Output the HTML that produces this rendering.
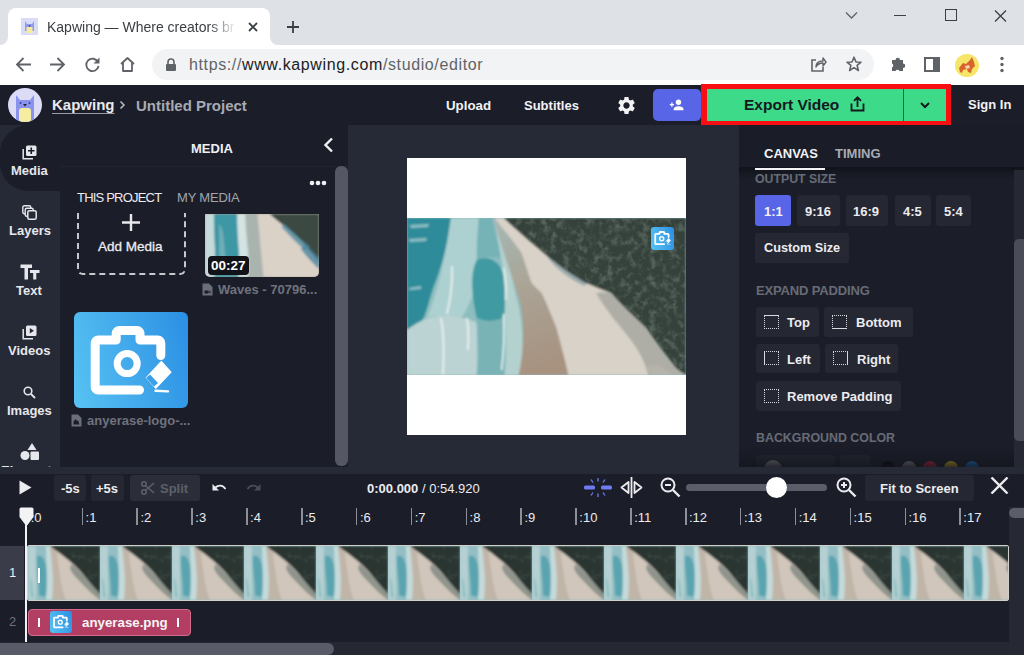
<!DOCTYPE html>
<html><head><meta charset="utf-8">
<style>
*{box-sizing:border-box;margin:0;padding:0}
html,body{width:1024px;height:655px;overflow:hidden;background:#dee1e6;font-family:"Liberation Sans",sans-serif}
.a{position:absolute}
.t{position:absolute;white-space:nowrap;line-height:1}
svg{display:block}
</style></head><body>
<!-- CHROME -->
<div class="a" style="left:0;top:0;width:1024px;height:45px;background:#dee1e6"></div>
<div class="a" style="left:8px;top:8px;width:262px;height:38px;background:#fff;border-radius:8px 8px 0 0"></div>
<div class="a" style="left:0;top:37px;width:8px;height:8px;background:#fff"></div>
<div class="a" style="left:0;top:29px;width:8px;height:16px;background:#dee1e6;border-radius:0 0 8px 0"></div>
<div class="a" style="left:270px;top:37px;width:8px;height:8px;background:#fff"></div>
<div class="a" style="left:270px;top:29px;width:10px;height:16px;background:#dee1e6;border-radius:0 0 0 8px"></div>
<!-- favicon -->
<svg class="a" style="left:21px;top:18px" width="17" height="17" viewBox="0 0 17 17"><rect width="17" height="17" fill="#d9dcf7"/><path d="M4 3 L6 6 L11 6 L13 3 L13 13 L4 13Z" fill="#8f9af0"/><rect x="5.5" y="9" width="6" height="6" fill="#f7ec9c"/><path d="M7.5 7.5h2l-1 1.5z" fill="#222"/></svg>
<div class="t" style="left:47px;top:20px;height:18px;font-size:14px;color:#3c4043;width:190px;overflow:hidden;-webkit-mask-image:linear-gradient(90deg,#000 85%,transparent)">Kapwing — Where creators br</div>
<svg class="a" style="left:247px;top:21px" width="12" height="12" viewBox="0 0 12 12"><path d="M2 2L10 10M10 2L2 10" stroke="#3c4043" stroke-width="1.8"/></svg>
<svg class="a" style="left:286px;top:20px" width="14" height="14" viewBox="0 0 14 14"><path d="M7 1V13M1 7H13" stroke="#3c4043" stroke-width="1.8"/></svg>
<!-- window controls -->
<svg class="a" style="left:845px;top:11px" width="13" height="9" viewBox="0 0 13 9"><path d="M1 1.5L6.5 7L12 1.5" stroke="#5f6368" stroke-width="1.3" fill="none"/></svg>
<div class="a" style="left:894px;top:15px;width:12px;height:1.2px;background:#3c4043"></div>
<div class="a" style="left:945px;top:9px;width:12px;height:12px;border:1.3px solid #3c4043"></div>
<svg class="a" style="left:994px;top:10px" width="13" height="12" viewBox="0 0 13 12"><path d="M1 0.5L12 11.5M12 0.5L1 11.5" stroke="#3c4043" stroke-width="1.3"/></svg>
<!-- toolbar -->
<div class="a" style="left:0;top:45px;width:1024px;height:40px;background:#fff"></div>
<svg class="a" style="left:15px;top:56px" width="17" height="17" viewBox="0 0 17 17"><path d="M16 8.5H2.5M8.5 2L2 8.5L8.5 15" stroke="#5f6368" stroke-width="1.8" fill="none"/></svg>
<svg class="a" style="left:49px;top:56px" width="17" height="17" viewBox="0 0 17 17"><path d="M1 8.5H14.5M8.5 2L15 8.5L8.5 15" stroke="#5f6368" stroke-width="1.8" fill="none"/></svg>
<svg class="a" style="left:84px;top:56px" width="17" height="17" viewBox="0 0 17 17"><path d="M14 6A6.2 6.2 0 1 0 14.6 10" stroke="#5f6368" stroke-width="1.8" fill="none"/><path d="M15.5 1.5V7.5H9.5Z" fill="#5f6368"/></svg>
<svg class="a" style="left:119px;top:56px" width="17" height="17" viewBox="0 0 17 17"><path d="M2 8L8.5 2L15 8M4 6.5V15H13V6.5" stroke="#5f6368" stroke-width="1.8" fill="none" stroke-linejoin="round"/></svg>
<div class="a" style="left:152px;top:49px;width:722px;height:31px;background:#f1f3f4;border-radius:16px"></div>
<svg class="a" style="left:165px;top:58px" width="12" height="13" viewBox="0 0 12 13"><path d="M3 6V4A3 3 0 0 1 9 4V6" stroke="#5f6368" stroke-width="1.6" fill="none"/><rect x="1" y="6" width="10" height="7" rx="1" fill="#5f6368"/></svg>
<div class="t" style="left:189px;top:57px;font-size:16px;letter-spacing:0.62px;color:#5f6368">https://<span style="color:#202124">www.kapwing.com</span>/studio/editor</div>
<!-- right toolbar icons -->
<svg class="a" style="left:810px;top:56px" width="17" height="16" viewBox="0 0 17 16"><path d="M6 4H2V15H13V11" stroke="#5f6368" stroke-width="1.6" fill="none"/><path d="M6 11C6 7 9 5 13 5V2L16 6L13 10V7C10 7 7.5 8 6 11Z" stroke="#5f6368" stroke-width="1.4" fill="none" stroke-linejoin="round"/></svg>
<svg class="a" style="left:846px;top:56px" width="16" height="16" viewBox="0 0 16 16"><path d="M8 1.2L10 6L15 6.2L11.1 9.4L12.4 14.5L8 11.7L3.6 14.5L4.9 9.4L1 6.2L6 6Z" stroke="#5f6368" stroke-width="1.6" fill="none" stroke-linejoin="round"/></svg>
<svg class="a" style="left:890px;top:56px" width="16" height="16" viewBox="0 0 16 16"><path d="M2 4H5.5A2.2 2.2 0 0 1 10 4H13V7.5A2.2 2.2 0 0 1 13 12V15H9.5A2.2 2.2 0 0 0 5.5 15H2V11.5A2.2 2.2 0 0 0 2 7.5Z" fill="#5f6368"/></svg>
<svg class="a" style="left:924px;top:57px" width="16" height="15" viewBox="0 0 16 15"><rect x="1" y="1" width="14" height="13" stroke="#5f6368" stroke-width="2" fill="none"/><rect x="9" y="1" width="6" height="13" fill="#5f6368"/></svg>
<div class="a" style="left:955px;top:54px;width:24px;height:23px;border-radius:50%;background:#f5e66a;overflow:hidden"><svg width="24" height="23" viewBox="0 0 24 23"><path d="M4 14L8 9L11 10L15 6L17 3L19 8L20 12L17 15L16 19L13 18L12 15L8 16L7 19L5 18Z" fill="#d8642b"/><path d="M10 12L14 11L15 14L11 15Z" fill="#f3d4b0"/></svg></div>
<svg class="a" style="left:999px;top:56px" width="6" height="17" viewBox="0 0 6 17"><circle cx="3" cy="2.5" r="1.7" fill="#5f6368"/><circle cx="3" cy="8.5" r="1.7" fill="#5f6368"/><circle cx="3" cy="14.5" r="1.7" fill="#5f6368"/></svg>


<svg width="0" height="0" style="position:absolute">
<defs>
<filter id="bl" x="-5%" y="-5%" width="110%" height="110%"><feGaussianBlur stdDeviation="1.2"/></filter>
<filter id="bl2" x="-5%" y="-5%" width="110%" height="110%"><feGaussianBlur stdDeviation="0.9"/></filter>
<filter id="tex" x="0" y="0" width="100%" height="100%"><feTurbulence type="fractalNoise" baseFrequency="0.14" numOctaves="3" seed="4" result="n"/><feColorMatrix in="n" type="matrix" values="0 0 0 0 0.13  0 0 0 0 0.17  0 0 0 0 0.15  0 0 0 3 -1.4" result="s"/><feComposite in="s" in2="SourceAlpha" operator="in"/></filter><filter id="tex2" x="0" y="0" width="100%" height="100%"><feTurbulence type="fractalNoise" baseFrequency="0.12" numOctaves="3" seed="7" result="n"/><feColorMatrix in="n" type="matrix" values="0 0 0 0 0.35  0 0 0 0 0.42  0 0 0 0 0.38  0 0 0 3 -1.7" result="s"/><feComposite in="s" in2="SourceAlpha" operator="in"/></filter><linearGradient id="wet" x1="0" y1="0" x2="1" y2="0"><stop offset="0" stop-color="#a3b5b0"/><stop offset=".6" stop-color="#b29f8a"/><stop offset="1" stop-color="#c9bcad"/></linearGradient>
<linearGradient id="wet2" x1="0" y1="0" x2="0.3" y2="1"><stop offset="0" stop-color="#a5b8b6"/><stop offset=".45" stop-color="#aaa597"/><stop offset="1" stop-color="#a89280"/></linearGradient><linearGradient id="logo" x1="0" y1="1" x2="1" y2="0"><stop offset="0" stop-color="#5cc6f4"/><stop offset="1" stop-color="#2b8de2"/></linearGradient>
<symbol id="beach" viewBox="0 0 280 157" preserveAspectRatio="none">
<rect width="280" height="157" fill="#8dbdbf"/>
<g filter="url(#bl2)">
<path d="M0,0 L46,0 C42,20 36,45 28,65 C22,80 20,95 14,105 C10,108 5,110 0,112Z" fill="#2f8b99"/>
<path d="M3,7 L22,6 L21,9 L4,10Z M2,21 L20,20 L19,23 L3,24Z M2,70 L14,68 L14,71 L3,72Z" fill="#cfe3e3" opacity=".6"/>
<path d="M44,0 L76,0 C74,20 72,40 70,60 C66,80 60,95 50,105 C40,100 30,95 20,100 C28,80 36,55 44,0Z" fill="#add0d0"/>
<path d="M0,112 C10,104 22,98 36,98 C50,98 62,100 70,105 L72,157 L0,157Z" fill="#bcd3d3"/>
<path d="M72,0 L88,0 C90,15 92,30 94,40 C84,38 76,40 70,42 C70,25 71,12 72,0Z" fill="#74b3b7"/>
<path d="M70,42 C84,36 96,46 98,62 C100,80 100,92 96,100 C88,104 78,104 70,100 C66,80 62,58 70,42Z" fill="#3f9aa2"/>
<path d="M70,100 C78,104 88,104 96,100 C98,120 100,140 98,157 L70,157 C72,130 70,115 70,100Z" fill="#79b3b5"/>
<path d="M86,0 L94,0 C98,25 104,55 110,80 C116,100 118,130 114,157 L98,157 C100,130 100,110 98,92 C100,70 94,30 86,0Z" fill="#b3d1cf"/>
<path d="M45,48 C46,65 44,80 40,96 M34,100 C38,120 37,140 36,157 M60,100 C62,110 62,120 61,132 M97,50 C99,60 100,70 99,82 M97,96 C98,115 97,135 95,152" stroke="#eef5f5" stroke-width="1.6" fill="none"/>
<path d="M86,0 L200,0 L200,157 L112,157 C118,130 118,100 112,80 C104,55 94,25 86,0Z" fill="url(#wet2)"/>
<path d="M88,0 L98,0 C112,12 125,25 137,35 C155,50 170,60 180,65 C190,70 198,73 205,75 C218,90 230,100 240,110 C250,125 260,140 270,150 L270,157 L162,157 C158,140 154,125 150,110 C144,95 140,85 135,75 C130,70 127,67 125,65 C120,50 116,38 115,35 C105,20 95,10 88,0Z" fill="#d9d2c8"/>
<path d="M190,75 C200,74 205,75 205,75 C218,90 230,100 240,110 C250,125 260,140 270,150 L280,157 L242,157 C238,140 228,125 215,110 C205,98 195,85 190,75Z" fill="#aeaea6"/>
<path d="M140,38 C155,48 170,58 182,64 L178,68 C165,62 150,52 140,38Z" fill="#8aa0a6" opacity=".8"/>
<path d="M97,0 L280,0 L280,157 C276,154 272,152 270,150 C262,140 250,125 240,110 C230,100 218,90 205,75 C198,72 190,69 180,65 C170,60 155,50 137,35 C125,25 110,12 97,0Z" fill="#34423b"/>
<path d="M240,150 C248,145 258,148 266,157 L246,157Z" fill="#b8b5ac" opacity=".8"/>
</g>
<path d="M97,0 L280,0 L280,157 C276,154 272,152 270,150 C262,140 250,125 240,110 C230,100 218,90 205,75 C198,72 190,69 180,65 C170,60 155,50 137,35 C125,25 110,12 97,0Z" fill="#000" filter="url(#tex)" opacity=".7"/><path d="M97,0 L280,0 L280,157 C276,154 272,152 270,150 C262,140 250,125 240,110 C230,100 218,90 205,75 C198,72 190,69 180,65 C170,60 155,50 137,35 C125,25 110,12 97,0Z" fill="#000" filter="url(#tex2)" opacity=".12"/>
</symbol>
<symbol id="thumb" viewBox="0 0 113 63" preserveAspectRatio="none">
<rect width="113" height="63" fill="#b0a99c"/>
<g filter="url(#bl2)">
<path d="M0,0 L10,0 C8,20 12,40 9,63 L0,63Z" fill="#c4dadb"/>
<path d="M9,0 L34,0 C31,20 36,45 33,63 L9,63 C12,40 8,20 9,0Z" fill="#3d97a4"/>
<path d="M14,10 C20,15 18,35 22,50 L14,45Z" fill="#7ab5bb" opacity=".8"/>
<path d="M32,0 L42,0 C40,20 45,45 43,63 L33,63 C36,45 31,20 32,0Z" fill="#d3e4e3"/>
<path d="M40,0 L56,0 C58,20 60,45 62,63 L43,63 C45,45 40,20 40,0Z" fill="#a9b4ae"/>
<path d="M52,0 L113,0 L113,63 L58,63 C56,45 54,20 52,0Z" fill="#dad1c7"/>
<path d="M64,0 L113,0 L113,48 C106,40 100,32 94,26 C86,18 76,10 64,0Z" fill="#3a4a42"/>
<path d="M78,10 C88,18 96,27 104,33 L99,36 C92,30 84,22 76,13Z" fill="#5b8fa3" opacity=".85"/>
<path d="M99,30 C104,35 110,40 113,44 L113,55 C106,48 100,42 95,35Z" fill="#4a84a0" opacity=".8"/>
</g>
</symbol>
<symbol id="frame" viewBox="0 0 72 53" preserveAspectRatio="none">
<rect width="72" height="53" fill="#93bec3"/>
<g filter="url(#bl2)">
<path d="M0,0 L8,0 C7,20 9,35 8,53 L0,53Z" fill="#b5d0d2"/>
<path d="M9,10 C14,8 19,16 19,26 C18,36 20,44 17,50 L11,48 C12,40 8,20 9,10Z" fill="#5aa4b0"/>
<path d="M2,30 C5,35 4,45 6,50 L3,50Z" fill="#7db5bd" opacity=".8"/>
<path d="M18,0 L25,0 C24,18 26,35 25,53 L18,53 C20,35 18,18 18,0Z" fill="#c4dada"/>
<path d="M22,0 L72,0 L72,53 L24,53 C26,35 25,18 22,0Z" fill="#d1c6bb"/>
<path d="M24,53 C26,40 25,25 22,0 L28,0 C31,25 33,40 38,53Z" fill="#bcb0a3" opacity=".8"/>
<path d="M44,18 C55,27 64,38 72,46 L72,53 C62,46 55,38 47,30 C43,25 40,21 44,18Z" fill="#8f948d"/>
<path d="M22,0 L72,0 L72,47 C67,42 62,36 57,30 C50,21 38,11 22,0Z" fill="#2b3631"/>
</g>
<path d="M22,0 L72,0 L72,47 C67,42 62,36 57,30 C50,21 38,11 22,0Z" fill="#000" filter="url(#tex2)" opacity=".15"/>
</symbol>
<symbol id="cam" viewBox="0 0 113 96">
<path d="M86.3,43.5 V31 A3,3 0 0 0 83.3,28 H65.5 V21.5 A3,3 0 0 0 62.5,18.5 H44.7 A3,3 0 0 0 41.7,21.5 V28 H23.7 A3,3 0 0 0 20.7,31 V75 A3,3 0 0 0 23.7,78 H65" stroke="#fff" stroke-width="9" fill="none" stroke-linecap="round" stroke-linejoin="round"/>
<circle cx="52.7" cy="51.6" r="10" stroke="#fff" stroke-width="7" fill="none"/>
<path d="M86.9,48.4 L97.2,60.3 L81.3,77 L71,65.8Z" fill="#fff"/>
<path d="M75.5,62.5 L83.5,71 L79.5,74.5 L71.5,66Z" fill="#3aa0e8"/>
<path d="M81,78.8 L93.5,79.4" stroke="#fff" stroke-width="2.4" stroke-linecap="round"/>
</symbol>
</defs>
</svg>
<!-- APP -->
<div class="a" style="left:0;top:85px;width:1024px;height:570px;background:#1b1e29"></div>

<!-- HEADER -->
<div class="a" style="left:0;top:85px;width:1024px;height:40px;background:#1b1e29"></div>
<div class="a" style="left:8px;top:88px;width:34px;height:34px;border-radius:50%;background:#dcdcf6;overflow:hidden"><svg width="34" height="34" viewBox="0 0 34 34"><path d="M8 7L12 12H22L26 7V34H8Z" fill="#8a94ee"/><rect x="11" y="20" width="12" height="14" rx="3" fill="#f6eda0"/><path d="M15 16h4l-2 2.5z" fill="#222"/><circle cx="12.5" cy="15" r="1" fill="#3a3f9a"/><circle cx="21.5" cy="15" r="1" fill="#3a3f9a"/></svg></div>
<div class="t" style="left:52px;top:97px;font-size:15px;font-weight:700;color:#e9e9ee;text-decoration:underline;text-underline-offset:3px;text-decoration-color:#9b9ba8">Kapwing</div>
<svg class="a" style="left:119px;top:100px" width="7" height="10" viewBox="0 0 7 10"><path d="M1.5 1.5L5 5L1.5 8.5" stroke="#bbbcc5" stroke-width="1.5" fill="none"/></svg>
<div class="t" style="left:136px;top:98px;font-size:15px;font-weight:700;color:#a8aab3">Untitled Project</div>
<div class="t" style="left:446px;top:99px;font-size:13.3px;font-weight:700;color:#f2f2f5">Upload</div>
<div class="t" style="left:524px;top:99px;font-size:13px;font-weight:700;color:#f2f2f5">Subtitles</div>
<svg class="a" style="left:616px;top:94.5px" width="21" height="21" viewBox="0 0 24 24"><path fill="#f2f2f5" d="M19.14 12.94c.04-.3.06-.61.06-.94 0-.32-.02-.64-.07-.94l2.03-1.58a.49.49 0 0 0 .12-.61l-1.92-3.32a.49.49 0 0 0-.59-.22l-2.39.96c-.5-.38-1.03-.7-1.62-.94l-.36-2.54a.48.48 0 0 0-.48-.41h-3.84c-.24 0-.43.17-.47.41l-.36 2.54c-.59.24-1.13.57-1.62.94l-2.39-.96a.48.48 0 0 0-.59.22L2.74 8.87c-.12.21-.08.47.12.61l2.03 1.58c-.05.3-.09.63-.09.94s.02.64.07.94l-2.03 1.58a.49.49 0 0 0-.12.61l1.92 3.32c.12.22.37.29.59.22l2.39-.96c.5.38 1.03.7 1.62.94l.36 2.54c.05.24.24.41.48.41h3.84c.24 0 .44-.17.47-.41l.36-2.54c.59-.24 1.13-.56 1.62-.94l2.39.96c.22.08.47 0 .59-.22l1.92-3.32c.12-.22.07-.47-.12-.61l-2.01-1.58zM12 15.6c-1.98 0-3.6-1.62-3.6-3.6s1.62-3.6 3.6-3.6 3.6 1.62 3.6 3.6-1.62 3.6-3.6 3.6z"/></svg>
<div class="a" style="left:653px;top:89px;width:48px;height:32px;border-radius:5px;background:#5865e6"></div>
<svg class="a" style="left:669px;top:99px" width="16" height="12" viewBox="0 0 16 12"><circle cx="9.5" cy="3.2" r="2.7" fill="#fff"/><path d="M4.6 11.2C4.6 8.2 6.8 7.3 9.5 7.3S14.6 8.2 14.6 11.2Z" fill="#fff"/><path d="M0.8 5.7H5M2.9 3.6V7.8" stroke="#fff" stroke-width="1.3"/></svg>
<div class="a" style="left:701px;top:84px;width:250px;height:42px;background:#f80f14"></div>
<div class="a" style="left:707px;top:89px;width:196px;height:32px;background:#3ddb89"></div>
<div class="a" style="left:904px;top:89px;width:42px;height:32px;background:#3ddb89"></div>
<div class="a" style="left:903px;top:89px;width:1px;height:32px;background:#1f6b47"></div>
<div class="t" style="left:744px;top:97px;font-size:15.5px;font-weight:700;color:#16181f">Export Video</div>
<svg class="a" style="left:850px;top:96px" width="15" height="16" viewBox="0 0 15 16"><path d="M7.5 11V1.5M4 4.8L7.5 1.3L11 4.8" stroke="#16181f" stroke-width="1.8" fill="none"/><path d="M1.5 7.5V14.5H13.5V7.5" stroke="#16181f" stroke-width="1.8" fill="none"/></svg>
<svg class="a" style="left:919px;top:101px" width="12" height="8" viewBox="0 0 12 8"><path d="M2 2L6 6L10 2" stroke="#16181f" stroke-width="2" fill="none"/></svg>
<div class="t" style="left:968px;top:98px;font-size:13px;font-weight:700;color:#f2f2f5">Sign In</div>

<!-- MAIN BGs -->
<div class="a" style="left:0;top:125px;width:60px;height:342px;background:#262a36"></div>
<div class="a" style="left:0;top:125px;width:80px;height:66px;background:#1b1e29;border-radius:28px 0 0 28px"></div>
<div class="a" style="left:60px;top:125px;width:288px;height:342px;background:#1b1e29"></div>
<div class="a" style="left:348px;top:125px;width:391px;height:342px;background:#262a36"></div>
<div class="a" style="left:739px;top:125px;width:285px;height:342px;background:#1b1e29"></div>
<div class="a" style="left:0;top:467px;width:1024px;height:7px;background:#262a36"></div>
<div class="a" style="left:0;top:474px;width:1024px;height:181px;background:#1b1e29"></div>

<!-- LEFT NAV -->
<svg class="a" style="left:22px;top:145px" width="15" height="15" viewBox="0 0 15 15"><path d="M1.2 4V13.8H11" stroke="#e6e7ec" stroke-width="1.5" fill="none"/><rect x="4" y="0.5" width="10.5" height="10.5" rx="1.5" fill="#e6e7ec"/><path d="M9.25 2.5V9M6 5.75H12.5" stroke="#1b1e29" stroke-width="1.6"/></svg>
<div class="t" style="left:11px;top:164px;font-size:13px;font-weight:700;color:#e6e7ec">Media</div>
<svg class="a" style="left:22px;top:205px" width="15" height="15" viewBox="0 0 15 15"><rect x="0.8" y="0.8" width="8" height="8" rx="1.5" stroke="#e6e7ec" stroke-width="1.4" fill="none"/><rect x="3.2" y="3.2" width="8" height="8" rx="1.5" stroke="#e6e7ec" stroke-width="1.4" fill="#262a36"/><rect x="5.8" y="5.8" width="8.4" height="8.4" rx="1.5" stroke="#e6e7ec" stroke-width="1.5" fill="#262a36"/></svg>
<div class="t" style="left:9px;top:224px;font-size:13px;font-weight:700;color:#e6e7ec">Layers</div>
<svg class="a" style="left:20px;top:264px" width="20" height="16" viewBox="0 0 20 16"><path d="M0.5 0.5H12V4H8V15.5H4.5V4H0.5Z" fill="#e6e7ec"/><path d="M10 6H19.5V9H16.3V15.5H13.2V9H10Z" fill="#e6e7ec"/></svg>
<div class="t" style="left:16px;top:284px;font-size:13px;font-weight:700;color:#e6e7ec">Text</div>
<svg class="a" style="left:22px;top:325px" width="15" height="15" viewBox="0 0 15 15"><path d="M1.2 4V13.8H11" stroke="#e6e7ec" stroke-width="1.5" fill="none"/><rect x="4" y="0.5" width="10.5" height="10.5" rx="1.5" fill="#e6e7ec"/><path d="M7.8 3V8.5L12 5.75Z" fill="#262a36"/></svg>
<div class="t" style="left:8px;top:344px;font-size:13px;font-weight:700;color:#e6e7ec">Videos</div>
<svg class="a" style="left:23px;top:386px" width="13" height="13" viewBox="0 0 13 13"><circle cx="5" cy="5" r="3.8" stroke="#e6e7ec" stroke-width="1.6" fill="none"/><path d="M8 8L12 12" stroke="#e6e7ec" stroke-width="1.8"/></svg>
<div class="t" style="left:7px;top:404px;font-size:13px;font-weight:700;color:#e6e7ec">Images</div>
<svg class="a" style="left:20px;top:443px" width="20" height="18" viewBox="0 0 20 18"><path d="M12 0L16.5 7H7.5Z" fill="#e6e7ec"/><circle cx="5" cy="12.5" r="4.5" fill="#e6e7ec"/><rect x="10.5" y="8.5" width="8.5" height="8.5" rx="1" fill="#e6e7ec"/></svg>
<div class="a" style="left:0;top:464px;width:60px;height:3px;overflow:hidden"><div class="t" style="left:1px;top:0px;font-size:13px;font-weight:700;color:#e6e7ec">Elements</div></div>

<!-- MEDIA PANEL -->
<div class="t" style="left:191px;top:142px;font-size:13px;font-weight:700;color:#f0f0f4">MEDIA</div>
<svg class="a" style="left:323px;top:137px" width="11" height="16" viewBox="0 0 11 16"><path d="M9 1.5L2.5 8L9 14.5" stroke="#f0f0f4" stroke-width="2.4" fill="none"/></svg>
<div class="a" style="left:60px;top:166px;width:288px;height:1px;background:#22252f"></div>
<div class="a" style="left:335px;top:166px;width:13px;height:300px;background:#555864;border-radius:6px"></div>
<svg class="a" style="left:309px;top:180px" width="18" height="6" viewBox="0 0 18 6"><circle cx="3" cy="3" r="2.3" fill="#f0f0f4"/><circle cx="9" cy="3" r="2.3" fill="#f0f0f4"/><circle cx="15" cy="3" r="2.3" fill="#f0f0f4"/></svg>
<div class="t" style="left:77px;top:191px;font-size:13px;letter-spacing:-0.8px;color:#ececf0">THIS PROJECT</div>
<div class="t" style="left:177px;top:191px;font-size:13px;letter-spacing:-0.2px;color:#a3a5ae">MY MEDIA</div>
<div class="a" style="left:77px;top:200px;width:109px;height:75px;border:2px dashed #c8c9cf;border-radius:6px;clip-path:inset(13px -2px -2px -2px)"></div>
<svg class="a" style="left:121px;top:214px" width="20" height="17" viewBox="0 0 20 17"><path d="M10 0V17M1 8.5H19" stroke="#e8e8ec" stroke-width="2.4"/></svg>
<div class="t" style="left:98px;top:240px;font-size:13.5px;color:#ececf0;font-weight:400;-webkit-text-stroke:0.3px #ececf0">Add Media</div>

<!-- thumbnails -->
<div class="a" style="left:205px;top:214px;width:114px;height:63px;border-radius:0 0 5px 5px;overflow:hidden"><svg width="114" height="63"><use href="#thumb" width="114" height="63"/></svg></div>
<div class="a" style="left:208px;top:256px;width:41px;height:19px;border-radius:4px;background:#111318"></div>
<div class="t" style="left:211px;top:259px;font-size:13.5px;font-weight:700;color:#fff">00:27</div>
<svg class="a" style="left:202px;top:283px" width="11" height="13" viewBox="0 0 11 13"><path d="M0.5 0.5H7L10.5 4V12.5H0.5Z" fill="#6c6f7a"/><path d="M2.5 7.5H6.5V10.5H2.5ZM6.5 9L8.5 7.5V10.5Z" fill="#1b1e29"/></svg>
<div class="t" style="left:218px;top:283px;font-size:13px;font-weight:700;color:#6f727d">Waves - 70796...</div>
<div class="a" style="left:74px;top:312px;width:114px;height:96px;border-radius:6px;background:linear-gradient(75deg,#58c3f3,#2b8fe3)"></div>
<svg class="a" style="left:74px;top:312px" width="114" height="96" viewBox="0 0 113 96"><use href="#cam" width="113" height="96"/></svg>
<svg class="a" style="left:71px;top:414px" width="11" height="13" viewBox="0 0 11 13"><path d="M0.5 0.5H7L10.5 4V12.5H0.5Z" fill="#6c6f7a"/><path d="M2.5 7.5L4.5 5L6 7L7 6L8.5 10.5H2.5Z" fill="#1b1e29"/></svg>
<div class="t" style="left:87px;top:414px;font-size:13px;font-weight:700;color:#6f727d">anyerase-logo-...</div>
<!-- CANVAS -->
<div class="a" style="left:407px;top:158px;width:279px;height:277px;background:#fff"></div>
<svg class="a" style="left:407px;top:218px" width="279" height="157"><use href="#beach" width="279" height="157"/></svg>
<div class="a" style="left:651px;top:227px;width:23px;height:23px;border-radius:3px;background:linear-gradient(75deg,#58c3f3,#2b8fe3)"></div>
<svg class="a" style="left:651px;top:228px" width="23" height="20" viewBox="0 0 113 96"><use href="#cam" width="113" height="96"/></svg>

<!-- RIGHT PANEL -->
<div class="a" style="left:739px;top:125px;width:285px;height:42px;background:#1a1d27"></div>
<div class="t" style="left:764px;top:147px;font-size:13px;font-weight:700;color:#f3f3f6">CANVAS</div>
<div class="t" style="left:835px;top:147px;font-size:13px;font-weight:700;color:#a9abb4">TIMING</div>
<div class="a" style="left:739px;top:167px;width:285px;height:3px;background:#12141b"></div>
<div class="a" style="left:755px;top:168px;width:70px;height:3px;background:#f3f3f6"></div>
<div class="a" style="left:739px;top:170px;width:275px;height:10px;background:linear-gradient(#14161e,#1b1e29)"></div>
<div class="a" style="left:1014px;top:170px;width:10px;height:297px;background:#262934"></div>
<div class="a" style="left:1014px;top:239px;width:10px;height:202px;background:#4a4d58;border-radius:5px 0 0 5px"></div>
<div class="t" style="left:755px;top:173px;font-size:12.3px;font-weight:700;color:#686b76">OUTPUT SIZE</div>
<div class="a" style="left:755px;top:195px;width:36px;height:31px;border-radius:3px;background:#5865e6"></div>
<div class="t" style="left:764px;top:205px;font-size:13px;font-weight:700;color:#f3f3f6">1:1</div>
<div class="a" style="left:797px;top:195px;width:43px;height:31px;border-radius:3px;background:#252833"></div>
<div class="t" style="left:805px;top:205px;font-size:13px;font-weight:700;color:#ececf0">9:16</div>
<div class="a" style="left:846px;top:195px;width:42px;height:31px;border-radius:3px;background:#252833"></div>
<div class="t" style="left:853px;top:205px;font-size:13px;font-weight:700;color:#ececf0">16:9</div>
<div class="a" style="left:895px;top:195px;width:36px;height:31px;border-radius:3px;background:#252833"></div>
<div class="t" style="left:903px;top:205px;font-size:13px;font-weight:700;color:#ececf0">4:5</div>
<div class="a" style="left:936px;top:195px;width:35px;height:31px;border-radius:3px;background:#252833"></div>
<div class="t" style="left:944px;top:205px;font-size:13px;font-weight:700;color:#ececf0">5:4</div>
<div class="a" style="left:755px;top:233px;width:94px;height:30px;border-radius:3px;background:#252833"></div>
<div class="t" style="left:764px;top:242px;font-size:12.7px;font-weight:700;color:#ececf0">Custom Size</div>
<div class="t" style="left:756px;top:284px;font-size:13px;font-weight:700;letter-spacing:-0.15px;color:#686b76">EXPAND PADDING</div>
<div class="a" style="left:756px;top:307px;width:63px;height:30px;border-radius:3px;background:#252833"></div>
<div class="a" style="left:764px;top:315px;width:15px;height:14px;border:1.5px dotted #d8d9de;border-top:1.5px solid #d8d9de"></div>
<div class="t" style="left:787px;top:316px;font-size:13px;font-weight:700;color:#ececf0">Top</div>
<div class="a" style="left:824px;top:307px;width:89px;height:30px;border-radius:3px;background:#252833"></div>
<div class="a" style="left:832px;top:315px;width:15px;height:14px;border:1.5px dotted #d8d9de;border-bottom:1.5px solid #d8d9de"></div>
<div class="t" style="left:856px;top:316px;font-size:13px;font-weight:700;color:#ececf0">Bottom</div>
<div class="a" style="left:756px;top:344px;width:64px;height:29px;border-radius:3px;background:#252833"></div>
<div class="a" style="left:764px;top:351px;width:15px;height:14px;border:1.5px dotted #d8d9de;border-left:1.5px solid #d8d9de"></div>
<div class="t" style="left:787px;top:353px;font-size:13px;font-weight:700;color:#ececf0">Left</div>
<div class="a" style="left:825px;top:344px;width:73px;height:29px;border-radius:3px;background:#252833"></div>
<div class="a" style="left:833px;top:351px;width:15px;height:14px;border:1.5px dotted #d8d9de;border-right:1.5px solid #d8d9de"></div>
<div class="t" style="left:857px;top:353px;font-size:13px;font-weight:700;color:#ececf0">Right</div>
<div class="a" style="left:756px;top:381px;width:145px;height:30px;border-radius:3px;background:#252833"></div>
<div class="a" style="left:764px;top:389px;width:15px;height:14px;border:1.5px dotted #d8d9de"></div>
<div class="t" style="left:787px;top:390px;font-size:13px;font-weight:700;color:#ececf0">Remove Padding</div>
<div class="t" style="left:756px;top:432px;font-size:12.4px;font-weight:700;color:#686b76">BACKGROUND COLOR</div>
<div class="a" style="left:739px;top:445px;width:275px;height:22px;overflow:hidden"><div class="a" style="left:17px;top:10px;width:79px;height:12px;border-radius:3px 3px 0 0;background:#252833"></div>
<div class="a" style="left:25px;top:15px;width:18px;height:18px;border-radius:50%;background:#8a8a8a"></div>
<div class="a" style="left:101px;top:10px;width:30px;height:12px;border-radius:3px 3px 0 0;background:#252833"></div>
<div class="a" style="left:142px;top:16px;width:14px;height:14px;border-radius:50%;background:#000"></div>
<div class="a" style="left:163px;top:16px;width:14px;height:14px;border-radius:50%;background:#8e8e8e"></div>
<div class="a" style="left:184px;top:16px;width:14px;height:14px;border-radius:50%;background:#d9243a"></div>
<div class="a" style="left:205px;top:16px;width:14px;height:14px;border-radius:50%;background:#e4c019"></div>
<div class="a" style="left:226px;top:16px;width:14px;height:14px;border-radius:50%;background:#1b7ed6"></div>
<div class="a" style="left:0px;top:0px;width:275px;height:22px;background:linear-gradient(rgba(27,30,41,0),rgba(20,22,30,.85))"></div></div>

<!-- TIMELINE -->
<svg class="a" style="left:19px;top:480px" width="13" height="15" viewBox="0 0 13 15"><path d="M0.5 0.5L12.5 7.5L0.5 14.5Z" fill="#ececf0"/></svg>
<div class="a" style="left:54px;top:475px;width:32px;height:26px;border-radius:3px;background:#252833"></div>
<div class="t" style="left:61px;top:482px;font-size:13px;font-weight:700;color:#ececf0">-5s</div>
<div class="a" style="left:91px;top:475px;width:33px;height:26px;border-radius:3px;background:#252833"></div>
<div class="t" style="left:96px;top:482px;font-size:13px;font-weight:700;color:#ececf0">+5s</div>
<div class="a" style="left:130px;top:475px;width:70px;height:26px;border-radius:3px;background:#2b2e39"></div>
<svg class="a" style="left:141px;top:481px" width="14" height="14" viewBox="0 0 14 14"><circle cx="3" cy="3" r="2.2" stroke="#5d606b" stroke-width="1.5" fill="none"/><circle cx="3" cy="11" r="2.2" stroke="#5d606b" stroke-width="1.5" fill="none"/><path d="M4.5 4.5L13 12M4.5 9.5L13 2" stroke="#5d606b" stroke-width="1.5"/></svg>
<div class="t" style="left:160px;top:482px;font-size:13px;font-weight:700;color:#5d606b">Split</div>
<svg class="a" style="left:212px;top:482px" width="15" height="11" viewBox="0 0 15 11"><path d="M3.5 5.5C6 3 10.5 2.5 13.5 7" stroke="#ececf0" stroke-width="1.8" fill="none"/><path d="M0.5 2V8.5H7Z" fill="#ececf0"/></svg>
<svg class="a" style="left:246px;top:482px" width="15" height="11" viewBox="0 0 15 11"><path d="M11.5 5.5C9 3 4.5 2.5 1.5 7" stroke="#4a4d58" stroke-width="1.8" fill="none"/><path d="M14.5 2V8.5H8Z" fill="#4a4d58"/></svg>
<div class="t" style="left:367px;top:482px;font-size:13px;color:#ececf0"><b>0:00.000</b> / 0:54.920</div>
<svg class="a" style="left:583px;top:477px" width="30" height="21" viewBox="0 0 30 21"><rect x="1" y="8.5" width="11" height="4" rx="1.5" fill="#6e7bf2"/><rect x="18" y="8.5" width="11" height="4" rx="1.5" fill="#6e7bf2"/><path d="M15 1V4.5M15 16.5V20M8 2.5L10 5.5M22 2.5L20 5.5M8 18.5L10 15.5M22 18.5L20 15.5" stroke="#6e7bf2" stroke-width="1.3"/></svg>
<svg class="a" style="left:620px;top:477px" width="23" height="21" viewBox="0 0 23 21"><path d="M11.5 0V21" stroke="#ececf0" stroke-width="1.8"/><path d="M8.5 5L1.5 10.5L8.5 16Z M14.5 5L21.5 10.5L14.5 16Z" stroke="#ececf0" stroke-width="1.8" fill="none" stroke-linejoin="round"/></svg>
<svg class="a" style="left:660px;top:477px" width="21" height="21" viewBox="0 0 21 21"><circle cx="8" cy="8" r="6.5" stroke="#ececf0" stroke-width="2" fill="none"/><path d="M5 8H11" stroke="#ececf0" stroke-width="2"/><path d="M13 13L19.5 19.5" stroke="#ececf0" stroke-width="2.4"/></svg>
<div class="a" style="left:686px;top:484px;width:141px;height:7px;border-radius:4px;background:#5b5e69"></div>
<div class="a" style="left:766px;top:477px;width:21px;height:21px;border-radius:50%;background:#fff"></div>
<svg class="a" style="left:836px;top:477px" width="21" height="21" viewBox="0 0 21 21"><circle cx="8" cy="8" r="6.5" stroke="#ececf0" stroke-width="2" fill="none"/><path d="M5 8H11M8 5V11" stroke="#ececf0" stroke-width="2"/><path d="M13 13L19.5 19.5" stroke="#ececf0" stroke-width="2.4"/></svg>
<div class="a" style="left:865px;top:475px;width:109px;height:26px;border-radius:3px;background:#252833"></div>
<div class="t" style="left:880px;top:482px;font-size:13px;font-weight:700;color:#ececf0">Fit to Screen</div>
<svg class="a" style="left:990px;top:477px" width="19" height="17" viewBox="0 0 19 17"><path d="M1.5 0.5L17.5 16.5M17.5 0.5L1.5 16.5" stroke="#ececf0" stroke-width="2.4"/></svg>
<!-- ruler -->
<div class="a" style="left:26.7px;top:508px;width:1.6px;height:17px;background:#8d9099"></div><div class="t" style="left:30.7px;top:511px;font-size:13px;color:#ececf0">:0</div><div class="a" style="left:81.6px;top:508px;width:1.6px;height:17px;background:#8d9099"></div><div class="t" style="left:85.6px;top:511px;font-size:13px;color:#ececf0">:1</div><div class="a" style="left:136.4px;top:508px;width:1.6px;height:17px;background:#8d9099"></div><div class="t" style="left:140.4px;top:511px;font-size:13px;color:#ececf0">:2</div><div class="a" style="left:191.3px;top:508px;width:1.6px;height:17px;background:#8d9099"></div><div class="t" style="left:195.3px;top:511px;font-size:13px;color:#ececf0">:3</div><div class="a" style="left:246.1px;top:508px;width:1.6px;height:17px;background:#8d9099"></div><div class="t" style="left:250.1px;top:511px;font-size:13px;color:#ececf0">:4</div><div class="a" style="left:301.0px;top:508px;width:1.6px;height:17px;background:#8d9099"></div><div class="t" style="left:305.0px;top:511px;font-size:13px;color:#ececf0">:5</div><div class="a" style="left:355.9px;top:508px;width:1.6px;height:17px;background:#8d9099"></div><div class="t" style="left:359.9px;top:511px;font-size:13px;color:#ececf0">:6</div><div class="a" style="left:410.7px;top:508px;width:1.6px;height:17px;background:#8d9099"></div><div class="t" style="left:414.7px;top:511px;font-size:13px;color:#ececf0">:7</div><div class="a" style="left:465.6px;top:508px;width:1.6px;height:17px;background:#8d9099"></div><div class="t" style="left:469.6px;top:511px;font-size:13px;color:#ececf0">:8</div><div class="a" style="left:520.4px;top:508px;width:1.6px;height:17px;background:#8d9099"></div><div class="t" style="left:524.4px;top:511px;font-size:13px;color:#ececf0">:9</div><div class="a" style="left:575.3px;top:508px;width:1.6px;height:17px;background:#8d9099"></div><div class="t" style="left:579.3px;top:511px;font-size:13px;color:#ececf0">:10</div><div class="a" style="left:630.2px;top:508px;width:1.6px;height:17px;background:#8d9099"></div><div class="t" style="left:634.2px;top:511px;font-size:13px;color:#ececf0">:11</div><div class="a" style="left:685.0px;top:508px;width:1.6px;height:17px;background:#8d9099"></div><div class="t" style="left:689.0px;top:511px;font-size:13px;color:#ececf0">:12</div><div class="a" style="left:739.9px;top:508px;width:1.6px;height:17px;background:#8d9099"></div><div class="t" style="left:743.9px;top:511px;font-size:13px;color:#ececf0">:13</div><div class="a" style="left:794.7px;top:508px;width:1.6px;height:17px;background:#8d9099"></div><div class="t" style="left:798.7px;top:511px;font-size:13px;color:#ececf0">:14</div><div class="a" style="left:849.6px;top:508px;width:1.6px;height:17px;background:#8d9099"></div><div class="t" style="left:853.6px;top:511px;font-size:13px;color:#ececf0">:15</div><div class="a" style="left:904.5px;top:508px;width:1.6px;height:17px;background:#8d9099"></div><div class="t" style="left:908.5px;top:511px;font-size:13px;color:#ececf0">:16</div><div class="a" style="left:959.3px;top:508px;width:1.6px;height:17px;background:#8d9099"></div><div class="t" style="left:963.3px;top:511px;font-size:13px;color:#ececf0">:17</div>
<div class="a" style="left:1009px;top:507px;width:15px;height:148px;background:#262934"></div>
<div class="a" style="left:1009px;top:508px;width:15px;height:10px;border-radius:5px 0 0 5px;background:#5b5e69"></div>
<!-- tracks -->
<div class="a" style="left:0;top:546px;width:24px;height:54px;background:#3a3d49"></div>
<div class="t" style="left:9px;top:566px;font-size:13px;color:#ececf0">1</div>
<div class="t" style="left:9px;top:615px;font-size:13px;color:#6f727d">2</div>
<div class="a" style="left:27px;top:545px;width:982px;height:56px;border:1px solid #d2cfcb;border-radius:2px;background:#333"></div>
<div class="a" style="left:28px;top:546px;width:980px;height:54px;overflow:hidden"><svg class="a" style="left:0px;top:0px" width="72" height="54"><use href="#frame" width="72" height="54"/></svg><svg class="a" style="left:72px;top:0px" width="72" height="54"><use href="#frame" width="72" height="54"/></svg><svg class="a" style="left:144px;top:0px" width="72" height="54"><use href="#frame" width="72" height="54"/></svg><svg class="a" style="left:216px;top:0px" width="72" height="54"><use href="#frame" width="72" height="54"/></svg><svg class="a" style="left:288px;top:0px" width="72" height="54"><use href="#frame" width="72" height="54"/></svg><svg class="a" style="left:360px;top:0px" width="72" height="54"><use href="#frame" width="72" height="54"/></svg><svg class="a" style="left:432px;top:0px" width="72" height="54"><use href="#frame" width="72" height="54"/></svg><svg class="a" style="left:504px;top:0px" width="72" height="54"><use href="#frame" width="72" height="54"/></svg><svg class="a" style="left:576px;top:0px" width="72" height="54"><use href="#frame" width="72" height="54"/></svg><svg class="a" style="left:648px;top:0px" width="72" height="54"><use href="#frame" width="72" height="54"/></svg><svg class="a" style="left:720px;top:0px" width="72" height="54"><use href="#frame" width="72" height="54"/></svg><svg class="a" style="left:792px;top:0px" width="72" height="54"><use href="#frame" width="72" height="54"/></svg><svg class="a" style="left:864px;top:0px" width="72" height="54"><use href="#frame" width="72" height="54"/></svg><svg class="a" style="left:936px;top:0px" width="72" height="54"><use href="#frame" width="72" height="54"/></svg>
</div><div class="a" style="left:38px;top:568px;width:2px;height:15px;background:#fff"></div>
<div class="a" style="left:28px;top:609px;width:163px;height:27px;border-radius:4px;background:#b23f63;border:1px solid #d46a8a"></div>
<div class="a" style="left:38px;top:618px;width:2px;height:9px;background:#fff"></div>
<div class="a" style="left:177px;top:618px;width:2px;height:9px;background:#fff"></div>
<div class="a" style="left:50px;top:611px;width:22px;height:22px;border-radius:3px;background:linear-gradient(75deg,#58c3f3,#2b8fe3)"></div>
<svg class="a" style="left:50px;top:612px" width="22" height="19" viewBox="0 0 113 96"><use href="#cam" width="113" height="96"/></svg>
<div class="t" style="left:82px;top:616px;font-size:13.3px;font-weight:700;color:#f5f5f7">anyerase.png</div>
<!-- playhead -->
<div class="a" style="left:25px;top:520px;width:2.4px;height:122px;background:#f3f3f6"></div>
<svg class="a" style="left:19px;top:507px" width="15" height="19" viewBox="0 0 15 19"><path d="M2 0.5H13A1.5 1.5 0 0 1 14.5 2V10L8.5 18H6.5L0.5 10V2A1.5 1.5 0 0 1 2 0.5Z" fill="#f3f3f6"/></svg>
<!-- h scrollbar -->
<div class="a" style="left:0;top:642px;width:1009px;height:13px;background:#252833"></div>
<div class="a" style="left:0;top:643px;width:334px;height:12px;border-radius:0 6px 6px 0;background:#595c68"></div>
<div id="app"></div>
</body></html>
